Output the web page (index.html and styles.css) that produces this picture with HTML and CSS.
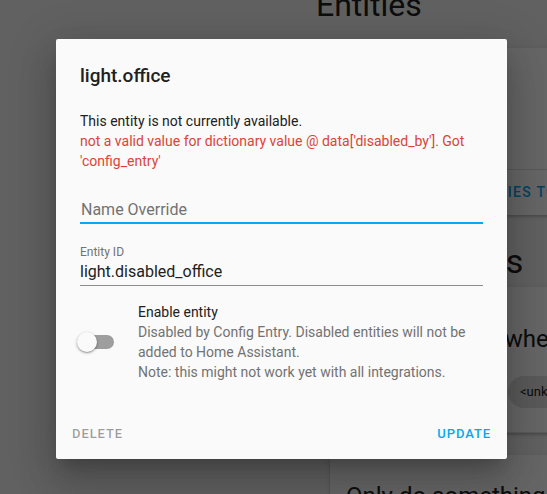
FILE: index.html
```html
<!DOCTYPE html>
<html lang="en">
<head>
    <meta charset="UTF-8">
    <meta name="viewport" content="width=device-width, initial-scale=1.0">
    <title>Entity settings</title>
    <link rel="stylesheet" href="styles.css">
</head>
<body>
    <!-- Page behind the dialog -->
    <div class="page">
        <h2 class="section-title">Entities</h2>
        <div class="card">
            <div class="card-body"></div>
            <div class="card-actions">
                <span class="card-button">Add selected entities to scene</span>
            </div>
        </div>

        <h2 class="section-title second">Related items</h2>
        <div class="card">
            <div class="card-text">Do something where</div>
            <div class="chip-row">
                <span class="chip">&lt;unknown&gt;</span>
            </div>
        </div>

        <div class="card">
            <div class="card-text last">Only do something</div>
        </div>
    </div>

    <div class="scrim"></div>

    <!-- Entity settings dialog -->
    <div class="dialog">
        <h1 class="dialog-title">light.office</h1>

        <div class="dialog-content">
            <p class="message">This entity is not currently available.</p>
            <p class="message error">not a valid value for dictionary value @ data['disabled_by']. Got 'config_entry'</p>

            <div class="field focused">
                <span class="field-placeholder">Name Override</span>
            </div>

            <div class="field filled">
                <span class="field-label">Entity ID</span>
                <span class="field-value">light.disabled_office</span>
            </div>

            <div class="settings-row">
                <div class="switch">
                    <span class="switch-thumb"></span>
                </div>
                <div class="settings-text">
                    <div class="settings-heading">Enable entity</div>
                    <div class="settings-desc">Disabled by Config Entry. Disabled entities will not be added to Home Assistant.</div>
                    <div class="settings-desc">Note: this might not work yet with all integrations.</div>
                </div>
            </div>
        </div>

        <div class="dialog-actions">
            <button class="text-button muted">Delete</button>
            <button class="text-button primary">Update</button>
        </div>
    </div>
</body>
</html>
```

FILE: styles.css
```css
body {
    margin: 0;
    width: 547px;
    height: 494px;
    overflow: hidden;
    font-family: Roboto, 'Noto Sans', sans-serif;
    position: relative;
}

/* Page behind */
.page {
    height: 494px;
    background-color: #f2f2f2;
    padding-left: 316px;
    overflow: hidden;
}

.section-title {
    margin: -15px 0 0 0;
    font-size: 32px;
    line-height: 40px;
    font-weight: 400;
    color: #212121;
    white-space: nowrap;
}

    .section-title.second {
        margin-top: 26px;
        font-size: 34px;
    }

.card {
    margin: 23px 0 0 14px;
    background-color: #ffffff;
    box-shadow: 0 2px 2px rgba(0, 0, 0, 0.14), 0 1px 5px rgba(0, 0, 0, 0.12);
    width: 320px;
}

.section-title.second + .card {
    margin-top: 6px;
    padding: 36px 16px 0;
    height: 109px;
    border-bottom: 1px solid #e0e0e0;
}

.card:last-child {
    margin-top: 22px;
    padding: 25px 16px 0;
    height: 60px;
}

.card-body {
    height: 121px;
}

.card-actions {
    border-top: 1px solid #e0e0e0;
    padding: 4px 8px 5px;
    white-space: nowrap;
}

.card-button {
    display: inline-block;
    height: 36px;
    line-height: 36px;
    padding: 0 8px;
    font-size: 14px;
    font-weight: 500;
    letter-spacing: 0.0892857em;
    text-transform: uppercase;
    color: #03a9f4;
    white-space: nowrap;
}

.card-text {
    font-size: 24px;
    line-height: 32px;
    color: #212121;
    white-space: nowrap;
    padding-left: 4px;
}

    .card-text.last {
        padding-left: 0;
    }

.chip-row {
    margin-top: 21px;
    padding-left: 162px;
}

.chip {
    display: inline-block;
    height: 32px;
    line-height: 32px;
    padding: 0 12px;
    border-radius: 16px;
    background-color: #e0e0e0;
    font-size: 13px;
    color: #212121;
}

.scrim {
    position: absolute;
    inset: 0;
    background-color: rgba(0, 0, 0, 0.6);
}

/* Dialog */
.dialog {
    position: absolute;
    left: 56px;
    top: 39px;
    width: 451px;
    height: 420px;
    box-sizing: border-box;
    display: flex;
    flex-direction: column;
    background-color: #fafafa;
    border-radius: 2px;
    box-shadow: 0 11px 15px -7px rgba(0, 0, 0, 0.2), 0 24px 38px 3px rgba(0, 0, 0, 0.14), 0 9px 46px 8px rgba(0, 0, 0, 0.12);
}

.dialog-title {
    margin: 0;
    padding: 21px 24px 0;
    font-size: 19px;
    line-height: 32px;
    font-weight: 500;
    color: #212121;
}

.dialog-content {
    padding: 19px 24px 0;
}

.message {
    margin: 0;
    font-size: 14px;
    line-height: 20px;
    color: #212121;
}

    .message.error {
        color: #db4437;
    }

.field {
    display: flex;
    flex-direction: column;
}

    .field.focused {
        margin-top: 27px;
        border-bottom: 2px solid #03a9f4;
    }

    .field.filled {
        margin-top: 20px;
        padding-bottom: 1px;
        border-bottom: 1px solid #8c8c8c;
    }

.field-placeholder {
    font-size: 16px;
    line-height: 24px;
    color: #727272;
    padding-left: 1px;
}

.field-label {
    font-size: 12px;
    line-height: 16px;
    color: #727272;
}

.field-value {
    font-size: 16px;
    line-height: 24px;
    color: #212121;
}

/* Enable toggle row */
.settings-row {
    display: flex;
    align-items: center;
    margin-top: 16px;
}

.switch {
    position: relative;
    flex: none;
    width: 34px;
    height: 14px;
    border-radius: 7px;
    background-color: #9e9e9e;
    margin-right: 24px;
}

.switch-thumb {
    position: absolute;
    left: -3px;
    top: -3px;
    width: 20px;
    height: 20px;
    border-radius: 50%;
    background-color: #fafafa;
    box-shadow: 0 1px 3px rgba(0, 0, 0, 0.35), 0 1px 1px rgba(0, 0, 0, 0.14);
}

.settings-text {
    flex: 1;
    font-size: 14px;
    line-height: 20px;
}

.settings-heading {
    color: #212121;
}

.settings-desc {
    color: #727272;
}

.dialog-actions {
    margin-top: auto;
    padding: 8px;
    display: flex;
    justify-content: space-between;
}

.text-button {
    height: 36px;
    padding: 0 8px;
    border: none;
    background: none;
    font-family: Roboto, sans-serif;
    font-size: 13px;
    font-weight: 500;
    letter-spacing: 0.07em;
    text-transform: uppercase;
    cursor: pointer;
}

    .text-button.muted {
        color: rgba(0, 0, 0, 0.38);
    }

    .text-button.primary {
        color: #03a9f4;
    }
```
